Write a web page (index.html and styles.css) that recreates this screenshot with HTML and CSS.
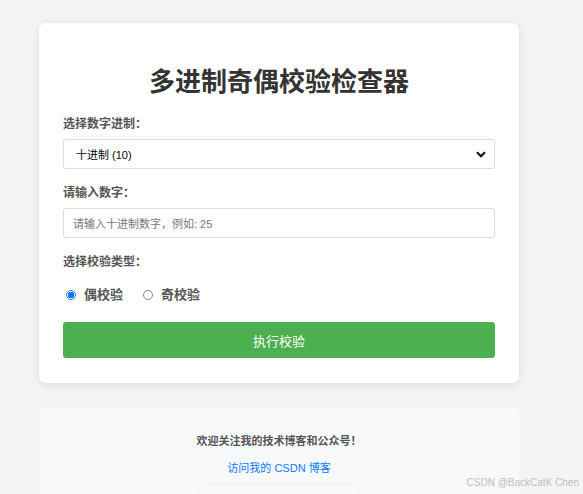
FILE: index.html
```html
<!DOCTYPE html>
<html lang="zh">
<head>
<meta charset="utf-8">
<title>多进制奇偶校验检查器</title>
<link rel="stylesheet" href="styles.css">
</head>
<body>
<div class="page">
  <div class="card">
    <h1 class="title">多进制奇偶校验检查器</h1>
    <div class="field">
      <label class="label">选择数字进制：</label>
      <div class="select">
        <span>十进制 (10)</span>
        <svg class="chev" width="10" height="7" viewBox="0 0 10 7"><path d="M1 1.2 L5 5.2 L9 1.2" fill="none" stroke="#111" stroke-width="2.2"/></svg>
      </div>
    </div>
    <div class="field">
      <label class="label">请输入数字：</label>
      <div class="input">请输入十进制数字，例如: 25</div>
    </div>
    <div class="field">
      <label class="label">选择校验类型：</label>
      <div class="radios">
        <label class="radio"><span class="dot on"></span><span>偶校验</span></label>
        <label class="radio"><span class="dot"></span><span>奇校验</span></label>
      </div>
    </div>
    <button class="btn">执行校验</button>
  </div>
  <div class="card2">
    <p class="welcome">欢迎关注我的技术博客和公众号！</p>
    <a class="link">访问我的 CSDN 博客</a>
    <div class="qr"></div>
  </div>
</div>
<div class="wm">CSDN @BackCatK Chen</div>
</body>
</html>
```
FILE: styles.css
```css
* { box-sizing: border-box; }
html, body { margin: 0; padding: 0; }
body {
  background: #f4f4f4;
  font-family: "Liberation Sans", Arial, "Noto Sans CJK SC", sans-serif;
  color: #333;
  height: 494px;
  overflow: hidden;
}
.page {
  padding: 23px 0 0 39px;
  width: 519px;
}
.card {
  background: #fff;
  border-radius: 7px;
  box-shadow: 0 2px 10px rgba(0,0,0,0.1);
  padding: 40px 24px 25px;
  display: flex;
  flex-direction: column;
}
.title {
  margin: 0 0 15px;
  text-align: center;
  font-size: 26px;
  line-height: 38px;
  font-weight: bold;
  color: #333;
}
.field { display: flex; flex-direction: column; margin-bottom: 16px; }
.label {
  font-size: 12px;
  font-weight: bold;
  color: #555;
  line-height: 16px;
  margin-bottom: 7px;
}
.select {
  height: 30px;
  border: 1px solid #ddd;
  border-radius: 3px;
  display: flex;
  align-items: center;
  justify-content: space-between;
  padding: 0 6px 0 12px;
  font-size: 11px;
  color: #000;
}
.chev { margin-right: 2px; }
.input {
  height: 30px;
  border: 1px solid #ddd;
  border-radius: 3px;
  display: flex;
  align-items: center;
  padding: 0 9px;
  font-size: 11px;
  color: #777;
}
.radios { display: flex; gap: 20px; padding: 7px 0 0 3px; }
.radio {
  display: flex;
  align-items: center;
  gap: 8px;
  font-size: 13px;
  font-weight: bold;
  color: #555;
}
.dot {
  width: 10px; height: 10px;
  border: 1px solid #888;
  border-radius: 50%;
  margin-top: 3px;
  background: #fff;
}
.dot.on {
  border-color: #1a73e8;
  background: radial-gradient(circle, #1a73e8 0 3px, #fff 3.2px);
}
.btn {
  height: 36px;
  border: none;
  border-radius: 3px;
  background: #4caf50;
  color: #fff;
  font-size: 13px;
  font-family: inherit;
  margin-top: 3px;
}
.card2 {
  margin-top: 24px;
  background: #f8f9fa;
  border-radius: 7px;
  padding: 27px 20px 0;
  display: flex;
  flex-direction: column;
  align-items: center;
  height: 120px;
}
.welcome {
  margin: 0 0 13px;
  font-size: 11px;
  font-weight: bold;
  color: #555;
  line-height: 14px;
}
.link {
  font-size: 11px;
  color: #0a7cff;
  line-height: 14px;
}
.qr {
  margin-top: 10px;
  width: 158px;
  height: 40px;
  background: #f8f9fa;
  border-radius: 6px;
  box-shadow: 0 0 5px rgba(0,0,0,0.06);
}
.wm {
  position: absolute;
  right: 4px;
  top: 476px;
  font-size: 10px;
  color: #bdbdbd;
  line-height: 14px;
  white-space: nowrap;
}
```
